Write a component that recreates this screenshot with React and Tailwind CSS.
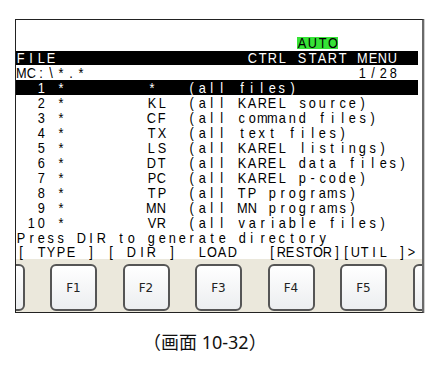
const CW = 'w-[10.05px]';

// one character per LCD cell, glyph centred and a bit condensed
function Cells({ text, narrow }) {
    return (
        <>
            {text.split('').map((ch, i) => (
                <span key={i} className={`flex ${narrow ? 'w-[9.3px]' : CW} shrink-0 justify-center`}>
                    <span className="scale-x-85 whitespace-pre">{ch === ' ' ? '\u00a0' : ch}</span>
                </span>
            ))}
        </>
    );
}

const rows = [
    ['1', '*', '(all files)'],
    ['2', 'KL', '(all KAREL source)'],
    ['3', 'CF', '(all command files)'],
    ['4', 'TX', '(all text files)'],
    ['5', 'LS', '(all KAREL listings)'],
    ['6', 'DT', '(all KAREL data files)'],
    ['7', 'PC', '(all KAREL p-code)'],
    ['8', 'TP', '(all TP programs)'],
    ['9', 'MN', '(all MN programs)'],
    ['10', 'VR', '(all variable files)'],
];

const rowText = ([n, type, desc]) => n.padStart(3) + ' *' + ' '.repeat(8) + type.padEnd(2) + '  ' + desc;

function FKey({ label }) {
    return (
        <div className="flex h-[47px] w-[47px] shrink-0 items-center justify-center rounded-[6px] border-2 border-[#555] bg-linear-to-b from-white to-[#eceef0] text-[12px] text-[#222] [font-family:'DejaVu_Sans',sans-serif]">
            {label}
        </div>
    );
}

export default function App() {
    return (
        <div className="min-h-[374px] bg-white pl-[15px] pt-[19px]">
            <div className="w-[409px] border-y border-l border-r-2 border-[#222] border-r-[#6a6a6a] bg-white text-[15px] text-black shadow-[1px_0_0_#cfcfcf] [font-family:'Liberation_Sans',Arial,sans-serif]">
                {/* LCD text area */}
                <div className="pt-[16px]">
                    <div className="flex h-[15px] pl-[281.4px]">
                        <div className="mt-[1px] flex h-[12px] bg-[#36e336] leading-[12px]">
                            <Cells text="AUTO" />
                        </div>
                    </div>
                    <div className="flex h-[14px] w-[402px] bg-black leading-[14px] text-white">
                        <Cells text={'FILE' + ' '.repeat(19) + 'CTRL START MENU'} />
                    </div>
                    <div className="flex h-[15px] leading-[15px]">
                        <Cells text={'MC:\\*.*' + ' '.repeat(27) + '1/28'} />
                    </div>
                    {rows.map((r, i) => (
                        <div
                            key={r[0]}
                            className={`flex h-[15px] w-[402px] leading-[15px] ${i === 0 ? 'bg-black text-white' : ''}`}
                        >
                            <Cells text={rowText(r)} />
                        </div>
                    ))}
                    <div className="flex h-[15px] leading-[15px]">
                        <Cells text="Press DIR to generate directory" />
                    </div>
                    <div className="flex h-[14px] leading-[14px]">
                        <Cells text="[ TYPE ] [ DIR ]  LOAD   " />
                        <Cells text="[RESTOR][UTIL ]>" narrow />
                    </div>
                </div>

                {/* function keys */}
                <div className="h-[53px] overflow-hidden bg-[#ebe8dc] pt-[5px]">
                    <div className="ml-[-38.5px] flex gap-[25.5px]">
                        <FKey label="" />
                        <FKey label="F1" />
                        <FKey label="F2" />
                        <FKey label="F3" />
                        <FKey label="F4" />
                        <FKey label="F5" />
                        <FKey label="" />
                    </div>
                </div>
            </div>

            <div className="mt-[17px] pl-[128px] text-[18px] leading-[24px] text-[#111] [font-family:'Noto_Sans','Noto_Sans_CJK_SC',sans-serif]">
                （画面 10-32）
            </div>
        </div>
    );
}
